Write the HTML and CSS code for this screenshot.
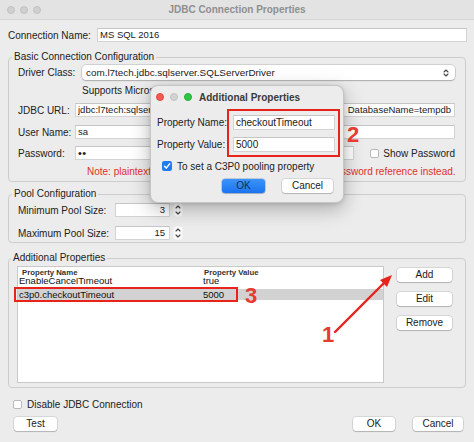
FILE: index.html
```html
<!DOCTYPE html>
<html>
<head>
<meta charset="utf-8">
<title>JDBC Connection Properties</title>
<link rel="stylesheet" href="styles.css">
</head>
<body>
<div class="window">
  <div class="titlebar">
    <div class="lights"><span class="light"></span><span class="light"></span><span class="light"></span></div>
    <div class="title">JDBC Connection Properties</div>
    <div></div>
  </div>
  <div class="content">
    <div class="row conn-row">
      <span class="lbl w-conn">Connection Name:</span>
      <div class="field grow conn-field">MS SQL 2016</div>
    </div>

    <fieldset class="group basic">
      <legend>Basic Connection Configuration</legend>
      <div class="row driver-row">
        <span class="lbl w-driver">Driver Class:</span>
        <div class="combo grow">
          <span class="combo-text">com.l7tech.jdbc.sqlserver.SQLServerDriver</span>
          <svg class="combo-arrows" width="6" height="10" viewBox="0 0 6 10"><path d="M1 4 L3 2 L5 4 M1 6 L3 8 L5 6" fill="none" stroke="#444" stroke-width="1.1" stroke-linecap="round" stroke-linejoin="round"/></svg>
        </div>
      </div>
      <div class="supports">Supports Microsoft SQL Server</div>
      <div class="row field-row url-row">
        <span class="lbl w-field">JDBC URL:</span>
        <div class="field grow url-field"><span class="url-head">jdbc:l7tech:sqlserver://mssql2016:1433;</span><span class="url-tail">DatabaseName=tempdb</span></div>
      </div>
      <div class="row field-row user-row">
        <span class="lbl w-field">User Name:</span>
        <div class="field grow">sa</div>
      </div>
      <div class="row field-row pass-row">
        <span class="lbl w-field">Password:</span>
        <div class="field grow dots">••</div>
        <span class="check"></span>
        <span class="check-label">Show Password</span>
      </div>
      <div class="note">Note: plaintext password is unsafe. Please use secure password reference instead.</div>
    </fieldset>

    <fieldset class="group pool">
      <legend>Pool Configuration</legend>
      <div class="row spin-row">
        <span class="lbl w-pool">Minimum Pool Size:</span>
        <div class="field spin-field">3</div>
        <svg class="stepper" width="10" height="14" viewBox="0 0 10 14"><rect x="0.5" y="0.5" width="9" height="13" rx="3" fill="#fafafa"/><path d="M3 5 L5 3 L7 5 M3 9 L5 11 L7 9" fill="none" stroke="#444" stroke-width="1.1" stroke-linecap="round" stroke-linejoin="round"/></svg>
      </div>
      <div class="row spin-row max-row">
        <span class="lbl w-pool">Maximum Pool Size:</span>
        <div class="field spin-field">15</div>
        <svg class="stepper" width="10" height="14" viewBox="0 0 10 14"><rect x="0.5" y="0.5" width="9" height="13" rx="3" fill="#fafafa"/><path d="M3 5 L5 3 L7 5 M3 9 L5 11 L7 9" fill="none" stroke="#444" stroke-width="1.1" stroke-linecap="round" stroke-linejoin="round"/></svg>
      </div>
    </fieldset>

    <fieldset class="group additional">
      <legend>Additional Properties</legend>
      <div class="props">
        <div class="table">
          <div class="trow thead">
            <span class="c-name">Property Name</span>
            <span class="c-value">Property Value</span>
          </div>
          <div class="trow clipped">
            <div class="clip-inner">
              <span class="c-name">EnableCancelTimeout</span>
              <span class="c-value">true</span>
            </div>
          </div>
          <div class="trow selected">
            <span class="c-name">c3p0.checkoutTimeout</span>
            <span class="c-value">5000</span>
          </div>
        </div>
        <div class="side-buttons">
          <div class="btn">Add</div>
          <div class="btn">Edit</div>
          <div class="btn">Remove</div>
        </div>
      </div>
    </fieldset>

    <div class="disable-row">
      <span class="check"></span>
      <span class="check-label">Disable JDBC Connection</span>
    </div>
    <div class="bottom-row">
      <div class="btn btn-test">Test</div>
      <div class="spacer"></div>
      <div class="btn btn-ok">OK</div>
      <div class="btn btn-cancel">Cancel</div>
    </div>
  </div>

  <div class="dialog">
    <div class="dlg-titlebar">
      <div class="dlg-lights"><span class="dl red"></span><span class="dl gray"></span><span class="dl green"></span></div>
      <div class="dlg-title">Additional Properties</div>
    </div>
    <div class="dlg-body">
      <div class="row dlg-row">
        <span class="lbl w-dlg">Property Name:</span>
        <div class="field grow">checkoutTimeout</div>
      </div>
      <div class="row dlg-row dlg-row2">
        <span class="lbl w-dlg">Property Value:</span>
        <div class="field grow">5000</div>
      </div>
      <div class="dlg-check-row">
        <svg class="bluecheck" width="10" height="10" viewBox="0 0 10 10"><rect width="10" height="10" rx="2.2" fill="#1f7bf2"/><path d="M2.5 5.2 L4.3 7.1 L7.6 2.9" fill="none" stroke="#fff" stroke-width="1.5" stroke-linecap="round" stroke-linejoin="round"/></svg>
        <span>To set a C3P0 pooling property</span>
      </div>
      <div class="dlg-buttons">
        <div class="btn btn-default">OK</div>
        <div class="btn dlg-cancel">Cancel</div>
      </div>
    </div>
  </div>

  <svg class="annot" width="474" height="442" viewBox="0 0 474 442">
    <rect x="228" y="110" width="111" height="46" fill="none" stroke="#e8231b" stroke-width="2"/>
    <rect x="15" y="288" width="222" height="13" fill="none" stroke="#e8231b" stroke-width="2"/>
    <line x1="335" y1="332" x2="385" y2="282" stroke="#e8231b" stroke-width="2.4" stroke-linecap="round"/>
    <polygon points="392,275 380,280 387,287" fill="#e8231b"/>
  </svg>
  <div class="num num1">1</div>
  <div class="num num2">2</div>
  <div class="num num3">3</div>
</div>
</body>
</html>
```

FILE: styles.css
```css
* { box-sizing: border-box; }

html, body {
  margin: 0;
  padding: 0;
  background: #ececec;
}

body {
  font-family: "Liberation Sans", Arial, sans-serif;
  font-size: 10px;
  color: #222;
}

.window {
  position: relative;
  width: 474px;
  height: 442px;
  overflow: hidden;
  background: #ececec;
}

/* title bar */
.titlebar {
  height: 20px;
  background: #e3e3e3;
  border-bottom: 1px solid #d6d6d6;
  display: grid;
  grid-template-columns: 1fr auto 1fr;
  align-items: center;
}
.lights {
  display: flex;
  gap: 5px;
  padding-left: 7px;
}
.light {
  width: 8px;
  height: 8px;
  border-radius: 50%;
  background: #d0d0d0;
  border: 0.5px solid #c2c2c2;
}
.title {
  font-weight: bold;
  font-size: 10px;
  color: #8f8f8f;
}

.content {
  padding: 8px 8px 0 8px;
}

.row {
  display: flex;
  align-items: center;
}
.grow { flex: 1; min-width: 0; }

.lbl {
  flex: none;
  white-space: nowrap;
  color: #222;
}
.w-conn { width: 89px; }
.w-driver { width: 64px; }
.w-field { width: 57px; }
.w-pool { width: 97px; }
.w-dlg { width: 76px; }

.field {
  height: 14px;
  background: #fff;
  border: 1px solid #d3d3d3;
  border-top-color: #c6c6c6;
  padding-left: 3px;
  font-size: 9.5px;
  line-height: 12px;
  white-space: nowrap;
  overflow: hidden;
  color: #1a1a1a;
}

.conn-row { height: 14px; }
.conn-field { margin-right: -1px; padding-left: 2px; }

/* group boxes */
.group {
  margin: 9px 0 0 0;
  border: 1px solid #cdcdcd;
  border-radius: 4px;
  padding: 2px 10px 3px 9px;
  min-width: 0;
}
.group legend {
  font-size: 10px;
  line-height: 12px;
  padding: 0 2px;
  margin-left: -6px;
  color: #222;
}

.driver-row { height: 15px; }
.combo {
  height: 15px;
  background: #fff;
  border-radius: 4px;
  box-shadow: 0 0 0 0.5px rgba(0,0,0,0.22), 0 1px 1.5px rgba(0,0,0,0.18);
  display: flex;
  align-items: center;
  padding: 0 6px 0 4px;
}
.combo-text { flex: 1; white-space: nowrap; color: #1a1a1a; font-size: 9.9px; }
.combo-arrows { flex: none; }

.supports {
  margin-top: 5px;
  line-height: 12px;
  padding-left: 64px;
  white-space: nowrap;
}

.field-row { height: 14px; }
.url-row { margin-top: 6px; }
.user-row { margin-top: 8px; }
.pass-row { margin-top: 7px; }
.url-row .field, .user-row .field, .pass-row .field { padding-left: 2px; }
.url-field {
  display: flex;
  justify-content: space-between;
  padding-right: 3px;
}
.url-head { min-width: 0; overflow: hidden; }
.url-tail { flex: none; }

.dots {
  font-size: 11px;
  letter-spacing: 0.5px;
  padding-left: 4px;
}

.check {
  flex: none;
  display: inline-block;
  width: 9px;
  height: 9px;
  background: #fff;
  border: 1px solid #b9b9b9;
  border-radius: 2px;
}
.pass-row .check { margin-left: 16px; }
.check-label {
  margin-left: 4px;
  white-space: nowrap;
}

.note {
  margin-top: 6px;
  line-height: 12px;
  padding-left: 69px;
  color: #e0302a;
  white-space: nowrap;
}

/* pool */
.pool { margin-top: 6px; padding-top: 3px; padding-bottom: 2px; }
.spin-row { height: 14px; }
.max-row { margin-top: 9px; }
.spin-field {
  width: 55px;
  text-align: right;
  padding-right: 4px;
}
.stepper { margin-left: 3px; flex: none; }

/* additional */
.additional {
  padding: 2px 13px 4px 8px;
}
.props {
  display: flex;
  gap: 13px;
}
.table {
  flex: 1;
  height: 117px;
  background: #fff;
  border: 1px solid #c9c9c9;
  overflow: hidden;
}
.trow {
  display: flex;
  height: 11px;
  line-height: 11px;
  font-size: 9.5px;
  white-space: nowrap;
  color: #111;
}
.c-name { width: 183px; padding-left: 1px; }
.c-value { padding-left: 2px; }
.thead {
  font-size: 7.8px;
  font-weight: bold;
  color: #333;
}
.thead .c-name { padding-left: 4px; }
.thead .c-value { padding-left: 3px; }
.clipped { overflow: hidden; }
.clip-inner {
  display: flex;
  margin-top: -3px;
}
.selected { background: #d2d2d2; }

.side-buttons {
  flex: none;
  width: 55px;
  display: flex;
  flex-direction: column;
  gap: 10px;
  padding-top: 2px;
}

.btn {
  height: 14px;
  line-height: 14px;
  text-align: center;
  background: #fff;
  border-radius: 3px;
  box-shadow: 0 0 0 0.5px rgba(0,0,0,0.18), 0 1px 1px rgba(0,0,0,0.16);
  color: #1a1a1a;
  font-size: 10px;
}

.disable-row {
  margin-top: 10px;
  height: 12px;
  display: flex;
  align-items: center;
  padding-left: 5px;
}
.disable-row .check-label { margin-left: 5px; }

.bottom-row {
  margin-top: 7px;
  display: flex;
  align-items: center;
}
.spacer { flex: 1; }
.btn-test { width: 43px; margin-left: 6px; }
.btn-ok { width: 42px; }
.btn-cancel { width: 50px; margin-left: 18px; margin-right: 3px; }

/* dialog (floats above the window) */
.dialog {
  position: absolute;
  left: 150px;
  top: 85px;
  width: 194px;
  height: 118px;
  background: #ececec;
  border: 1px solid rgba(0,0,0,0.16);
  border-radius: 8px;
  box-shadow: 0 6px 20px rgba(0,0,0,0.28), 0 1px 4px rgba(0,0,0,0.12);
}
.dlg-titlebar {
  height: 22px;
  display: flex;
  align-items: center;
  padding-left: 5px;
}
.dlg-lights { display: flex; gap: 6px; }
.dl {
  width: 8px;
  height: 8px;
  border-radius: 50%;
}
.dl.red { background: #f25a52; border: 0.5px solid #de4a42; }
.dl.gray { background: #d2d2d2; border: 0.5px solid #c4c4c4; }
.dl.green { background: #2fc645; border: 0.5px solid #22ad37; }
.dlg-title {
  margin-left: 7px;
  font-weight: bold;
  color: #3a3a3a;
}
.dlg-body {
  padding: 7px 8px 0 6px;
}
.dlg-row { height: 15px; }
.dlg-row .field { height: 15px; line-height: 13px; padding-left: 2px; font-size: 10px; }
.dlg-row2 { margin-top: 7px; }
.dlg-check-row {
  margin-top: 8px;
  height: 12px;
  display: flex;
  align-items: center;
  padding-left: 5px;
  gap: 5px;
  white-space: nowrap;
}
.bluecheck { flex: none; }
.dlg-buttons {
  margin-top: 7px;
  display: flex;
  justify-content: flex-end;
  padding-right: 2px;
  gap: 17px;
}
.btn-default {
  width: 43px;
  background: linear-gradient(#3c93f8, #1b74ef);
  color: #10305c;
  box-shadow: 0 0 0 0.5px rgba(0,60,160,0.4), 0 1px 1px rgba(0,0,0,0.15);
}
.dlg-cancel { width: 51px; }

/* annotations */
.annot {
  position: absolute;
  left: 0;
  top: 0;
  pointer-events: none;
}
.num {
  position: absolute;
  font-family: "Liberation Sans", Arial, sans-serif;
  font-weight: bold;
  font-size: 22px;
  line-height: 22px;
  color: #e63b2e;
}
.num1 { left: 322px; top: 324px; }
.num2 { left: 347px; top: 124px; }
.num3 { left: 245px; top: 285px; }
```
